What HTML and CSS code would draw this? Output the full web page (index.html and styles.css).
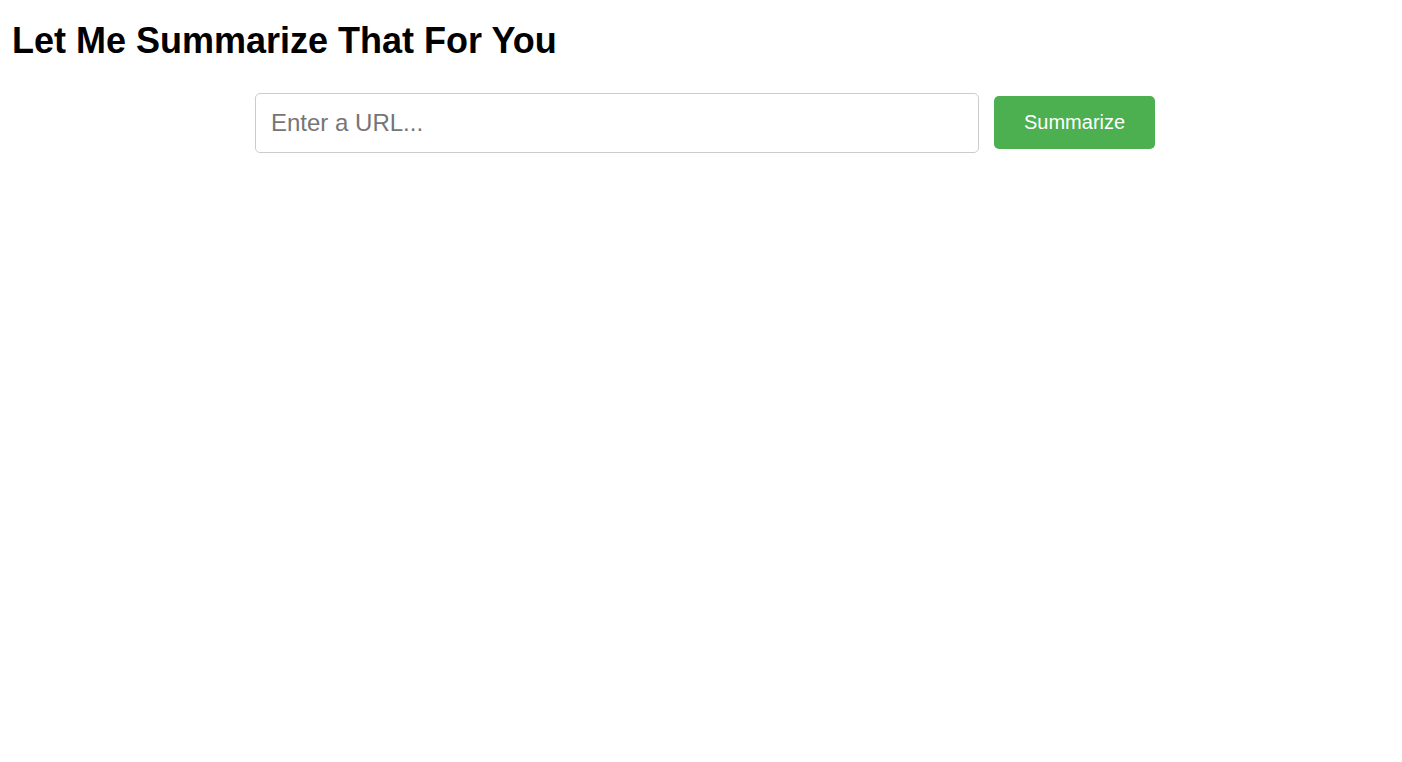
FILE: index.html
```html
<!DOCTYPE html>
<html lang="en">
<head>
<meta charset="utf-8">
<title>Let Me Summarize That For You</title>
<link rel="stylesheet" href="styles.css">
</head>
<body>
<div class="page">
  <h1 class="title">Let Me Summarize That For You</h1>
  <form class="url-form">
    <input class="url-input" type="text" placeholder="Enter a URL...">
    <button class="submit-btn" type="button">Summarize</button>
  </form>
</div>
</body>
</html>
```

FILE: styles.css
```css
html, body {
  background: #ffffff;
}
body {
  margin: 0;
  font-family: "Liberation Sans", Arial, sans-serif;
  color: #000;
}
.page {
  padding: 1px 8px 0 12px;
}
.title {
  font-size: 36px;
  font-weight: bold;
  margin: 19px 0 0 0;
  line-height: 41px;
}
.url-form {
  display: flex;
  justify-content: center;
  align-items: flex-start;
  gap: 15px;
  margin: 32px 0 0 0;
  padding-left: 4px;
}
.url-input {
  box-sizing: border-box;
  width: 724px;
  height: 60px;
  padding: 15px;
  font-family: "Liberation Sans", Arial, sans-serif;
  font-size: 24px;
  border: 1px solid #cccccc;
  border-radius: 5px;
  outline: none;
  color: #000;
}
.url-input::placeholder {
  color: #757575;
}
.submit-btn {
  box-sizing: border-box;
  width: 161px;
  height: 53px;
  margin-top: 3px;
  padding: 15px 30px;
  font-family: "Liberation Sans", Arial, sans-serif;
  font-size: 20px;
  color: #ffffff;
  background: #4caf50;
  border: none;
  border-radius: 5px;
  cursor: pointer;
}
```
